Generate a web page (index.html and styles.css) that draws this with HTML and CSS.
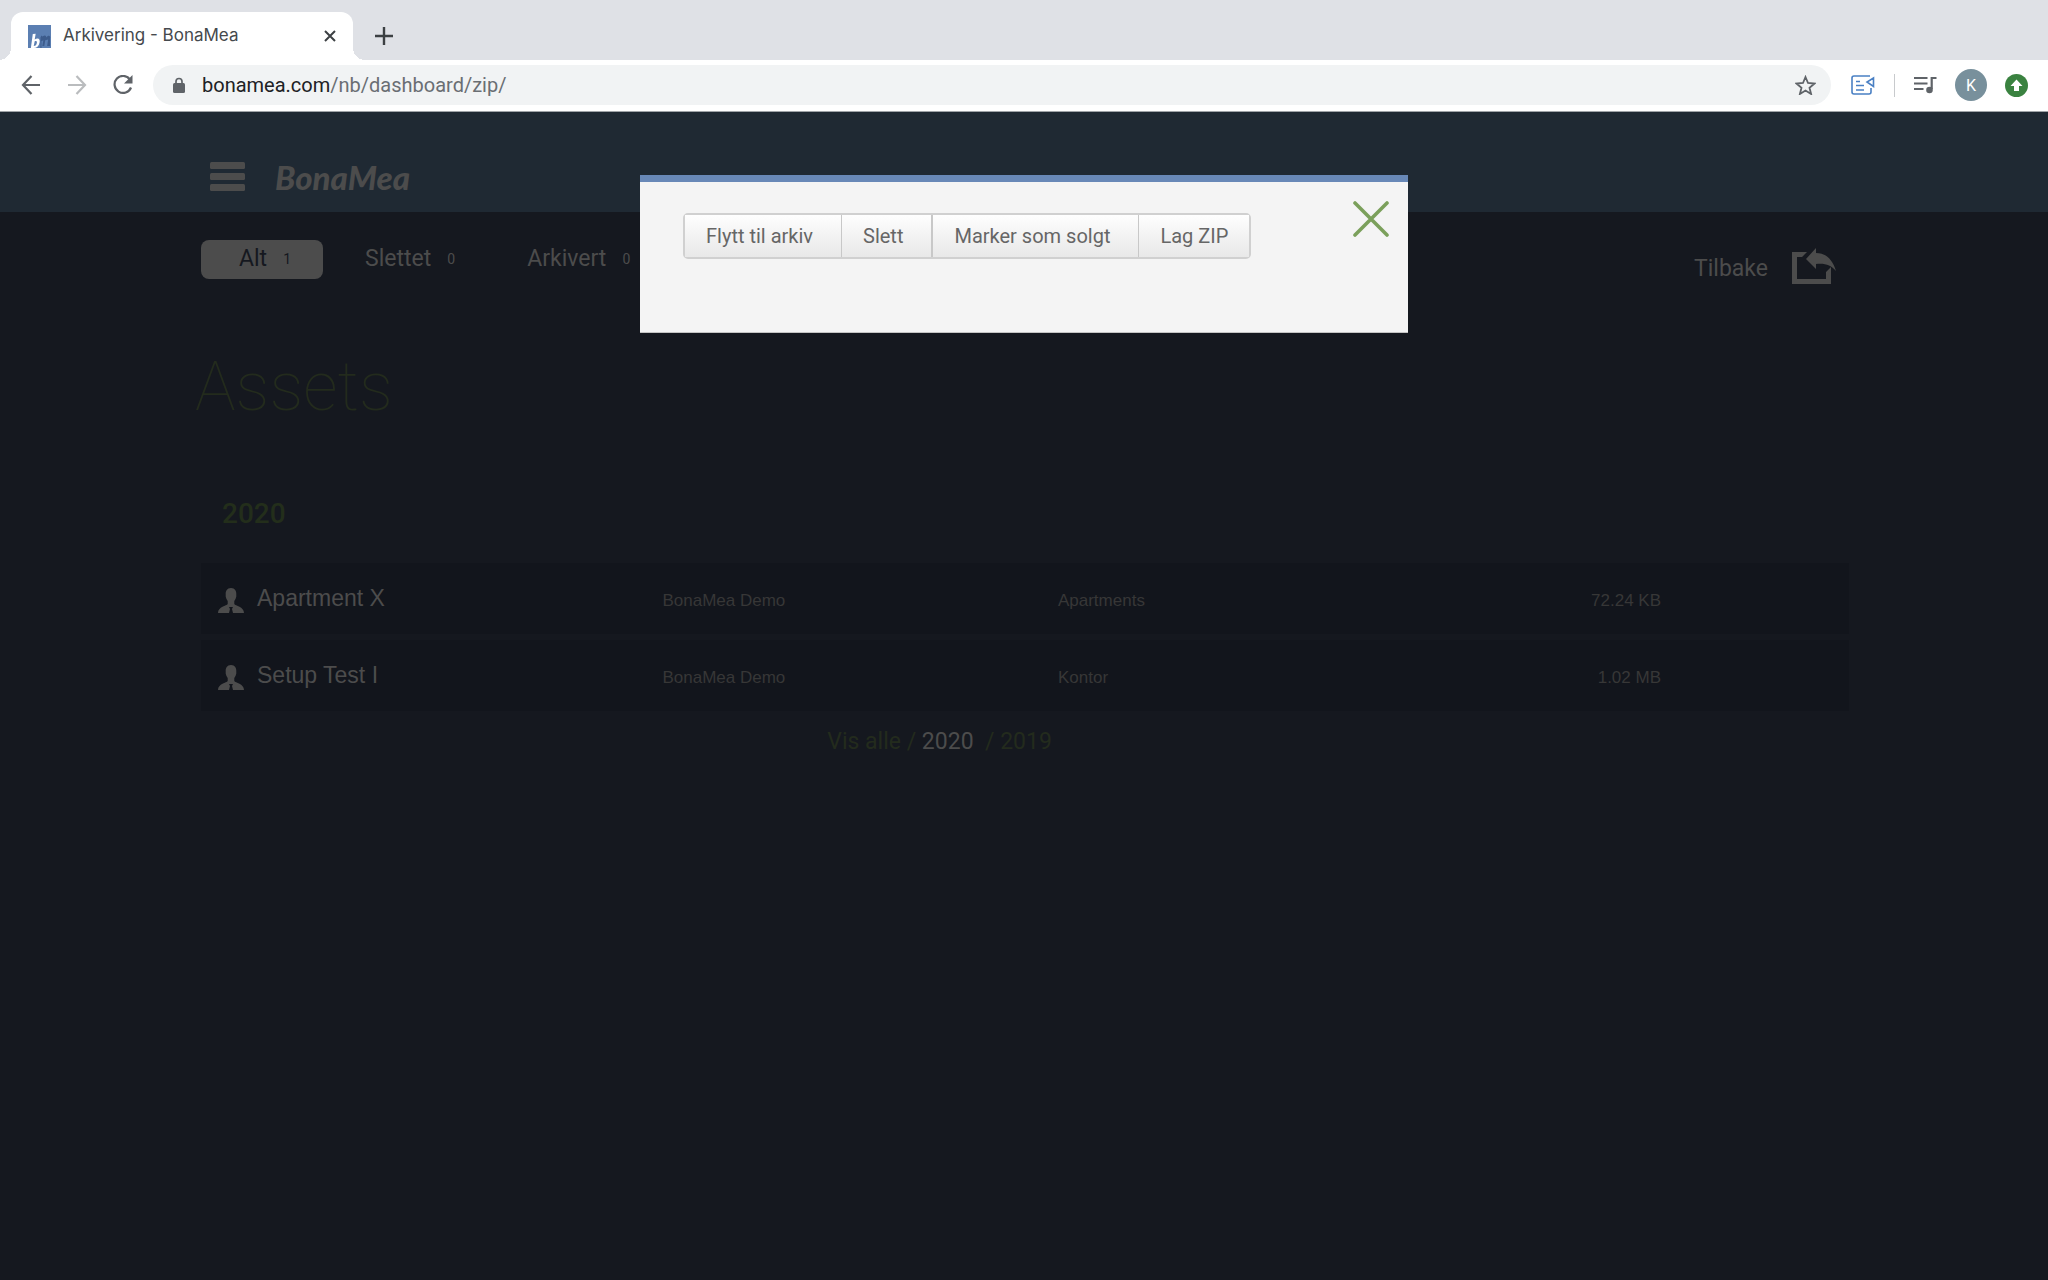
FILE: index.html
```html
<!DOCTYPE html>
<html lang="nb">
<head>
<meta charset="utf-8">
<title>Arkivering - BonaMea</title>
<link rel="stylesheet" href="styles.css">
</head>
<body>
<header class="browser">
  <div class="tabstrip">
    <div class="tab">
      <svg class="favicon" viewBox="0 0 24 24" aria-hidden="true">
        <rect width="24" height="24" fill="#5b7fb2"/>
        <path d="M13 24V13l1-2 1 1c3-2 4-1 4 1 2-3 5-2 4 1v8h-3l1-7-3 1-1 6h-2l1-6-2 1v7z" fill="#3d5c8c"/>
        <path d="M5 9.500l3-.5-1 6c4-2 6 0 5 3.500-.7 3.500-3 5.500-6 5.500H3zM7 17l-1 5c2 0 3-1.500 3.300-3.500C9.500 17 8.500 16.500 7 17z" fill="#fff"/>
      </svg>
      <span class="tab-title">Arkivering - BonaMea</span>
      <button class="icon-btn" type="button" aria-label="Close tab"><svg width="12" height="12" viewBox="0 0 12 12"><path d="M1 1l10 10M11 1L1 11" stroke="#3c4043" stroke-width="2"/></svg></button>
    </div>
    <button class="icon-btn" type="button" aria-label="New tab"><svg width="18" height="18" viewBox="0 0 18 18"><path d="M9 0v18M0 9h18" stroke="#3c4043" stroke-width="2.400"/></svg></button>
  </div>
  <div class="toolbar">
    <nav class="history">
      <button class="icon-btn" type="button" aria-label="Back"><svg width="20" height="20" viewBox="0 0 20 20" fill="none" stroke="#5f6368" stroke-width="2.200"><path d="M19 10H2M10.500 1L2 10l8.500 9"/></svg></button>
      <button class="icon-btn" type="button" aria-label="Forward"><svg width="20" height="20" viewBox="0 0 20 20" fill="none" stroke="#babcbe" stroke-width="2.200"><path d="M1 10h17M9.500 1L18 10l-8.500 9"/></svg></button>
      <button class="icon-btn" type="button" aria-label="Reload"><svg width="20" height="20" viewBox="0 0 20 20"><path d="M17 4.500A8.500 8.500 0 1 0 18 12.500" fill="none" stroke="#5f6368" stroke-width="2.200"/><path d="M19.500 0v8.500H11z" fill="#5f6368"/></svg></button>
    </nav>
    <div class="omnibox">
      <svg width="14" height="17" viewBox="0 0 14 17"><path d="M4 7V4.500a3 3 0 0 1 6 0V7" fill="none" stroke="#5f6368" stroke-width="1.700"/><rect x="1" y="6" width="12" height="10" rx="1.500" fill="#5f6368"/></svg>
      <div class="url"><strong>bonamea.com</strong>/nb/dashboard/zip/</div>
      <button class="icon-btn" type="button" aria-label="Bookmark"><svg width="21" height="20" viewBox="0 0 21 20"><path d="M10.500 2l2.500 6 6.500.5-5 4.300 1.600 6.200-5.600-3.400L4.900 19l1.600-6.200-5-4.300L8 8z" fill="none" stroke="#5f6368" stroke-width="1.800"/></svg></button>
    </div>
    <div class="extensions">
      <button class="icon-btn" type="button" aria-label="Notes"><svg width="24" height="20" viewBox="0 0 24 20" fill="none" stroke="#4a80c4" stroke-width="1.600"><path d="M19 1H3a2 2 0 0 0-2 2v14a2 2 0 0 0 2 2h15a2 2 0 0 0 2-2v-4M5 6.500h4M5 10.500h8M5 15h8M22.500 3v8.500L16 7z"/></svg></button>
      <span class="divider"></span>
      <button class="icon-btn" type="button" aria-label="Media"><svg width="23" height="18" viewBox="0 0 23 18" fill="none" stroke="#5f6368" stroke-width="2.200"><path d="M0 2h13.500M0 7.500h13.500M0 13h9.500M22.500 2h-4.800v11"/><circle cx="15.500" cy="14" r="3.300" fill="#5f6368" stroke="none"/></svg></button>
      <button class="avatar" type="button">K</button>
      <button class="icon-btn" type="button" aria-label="Update"><svg width="23" height="23" viewBox="0 0 23 23"><circle cx="11.500" cy="11.500" r="11.500" fill="#3a8240"/><path d="M11.500 5.500L17.500 12H14v5H9v-5H5.500z" fill="#fff"/></svg></button>
    </div>
  </div>
</header>

<div class="page">
  <header class="site-header">
    <div class="container brand-bar">
      <button class="icon-btn" type="button" aria-label="Meny"><svg width="35" height="30" viewBox="0 0 35 30" fill="#4c4c4c"><rect width="35" height="7" rx="1.500"/><rect y="11" width="35" height="7" rx="1.500"/><rect y="22" width="35" height="7" rx="1.500"/></svg></button>
      <a class="brand" href="#">BonaMea</a>
    </div>
  </header>

  <main class="container">
    <div class="filter-bar">
      <nav class="filters">
        <a class="filter active" href="#">Alt<span class="count">1</span></a>
        <a class="filter" href="#">Slettet<span class="count">0</span></a>
        <a class="filter" href="#">Arkivert<span class="count">0</span></a>
      </nav>
      <a class="back" href="#">Tilbake
        <svg width="44" height="36" viewBox="0 0 44 36" fill="#4c4c4c"><path d="M0 4h15l-5 5H5v22h29v-7l5-5v17H0z"/><path d="M14 11L24 0v5c11 0 17 8 20 18-5-6-11-8-20-7v5z"/></svg>
      </a>
    </div>

    <h1>Assets</h1>
    <h2>2020</h2>

    <table class="assets">
      <tbody>
        <tr>
          <td class="name"><div class="name-cell"><svg width="26" height="25" viewBox="0 0 26 25" fill="#4c4c4c"><path d="M13 0c4 0 5.500 3 5.300 6.500.4 3-1 5-2 6.500v3c1 2 9.700 2.500 9.700 9H15l-1-4 1-2h-4l1 2-1 4H0c0-6.500 8.700-7 9.700-9v-3c-1-1.500-2.400-3.500-2-6.500C7.500 3 9 0 13 0z"/></svg>Apartment X</div></td>
          <td class="owner">BonaMea Demo</td>
          <td class="kind">Apartments</td>
          <td class="size">72.24 KB</td>
        </tr>
        <tr>
          <td class="name"><div class="name-cell"><svg width="26" height="25" viewBox="0 0 26 25" fill="#4c4c4c"><path d="M13 0c4 0 5.500 3 5.300 6.500.4 3-1 5-2 6.500v3c1 2 9.700 2.500 9.700 9H15l-1-4 1-2h-4l1 2-1 4H0c0-6.500 8.700-7 9.700-9v-3c-1-1.500-2.400-3.500-2-6.500C7.500 3 9 0 13 0z"/></svg>Setup Test I</div></td>
          <td class="owner">BonaMea Demo</td>
          <td class="kind">Kontor</td>
          <td class="size">1.02 MB</td>
        </tr>
      </tbody>
    </table>

    <nav class="years"><a href="#">Vis alle</a> / <a class="current" href="#">2020</a> &nbsp;/ <a href="#">2019</a></nav>
  </main>

  <div class="modal" role="dialog" aria-label="Handlinger">
    <div class="actions">
      <button type="button">Flytt til arkiv</button>
      <button class="group-end" type="button">Slett</button>
      <button type="button">Marker som solgt</button>
      <button type="button">Lag ZIP</button>
    </div>
    <button class="icon-btn close" type="button" aria-label="Lukk"><svg width="36" height="36" viewBox="0 0 36 36"><path d="M2 2l32 32M34 2L2 34" stroke="#7ba05b" stroke-width="3.600" stroke-linecap="round"/></svg></button>
  </div>
</div>
</body>
</html>
```
FILE: styles.css
```css
* { box-sizing: border-box; }

body {
  margin: 0;
  min-height: 100vh;
  display: flex;
  flex-direction: column;
  background: #15181f;
  font-family: Roboto, sans-serif;
}

a { color: inherit; text-decoration: none; }
svg { display: block; flex: none; }
button { font-family: inherit; }

.icon-btn {
  display: flex;
  flex: none;
  padding: 0;
  border: 0;
  background: none;
}

/* Browser chrome */
.tabstrip {
  display: flex;
  align-items: center;
  gap: 22px;
  height: 60px;
  padding: 12px 11px 0;
  background: #dfe1e6;
}

.tab {
  position: relative;
  display: flex;
  align-items: center;
  gap: 12px;
  width: 342px;
  height: 48px;
  padding: 0 17px;
  border-radius: 12px 12px 0 0;
  background: #fff;
}

.tab::before,
.tab::after {
  content: "";
  position: absolute;
  bottom: 0;
  width: 12px;
  height: 12px;
}
.tab::before { left: -12px; background: radial-gradient(circle at 0 0, transparent 12px, #fff 12px); }
.tab::after { right: -12px; background: radial-gradient(circle at 100% 0, transparent 12px, #fff 12px); }

.favicon { width: 23px; height: 23px; }
.tab-title { flex: 1; padding-bottom: 2px; font-family: Inter, sans-serif; font-size: 17px; color: #45494d; }

.toolbar {
  display: flex;
  align-items: center;
  gap: 20px;
  height: 52px;
  padding: 0 20px 1px 21px;
  border-bottom: 1px solid #a0a4a8;
  background: #fff;
}

.history { display: flex; gap: 26px; }

.omnibox {
  flex: 1;
  display: flex;
  align-items: center;
  gap: 16px;
  height: 40px;
  padding: 0 15px 0 19px;
  border-radius: 20px;
  background: #f1f3f4;
}

.url { flex: 1; font-size: 20px; color: #6a6e73; }
.url strong { font-weight: 400; color: #202124; }

.extensions { display: flex; align-items: center; gap: 18px; }
.divider { width: 1px; height: 23px; margin: 0 1px; background: #c8cacd; }

.avatar {
  width: 32px;
  height: 32px;
  padding: 0;
  border: 0;
  border-radius: 50%;
  background: #78909c;
  color: #fff;
  font-size: 16px;
}

/* Page */
.page { position: relative; flex: 1; }

.container {
  width: 81%;
  max-width: 1650px;
  margin: 0 auto;
  padding-left: 2px;
}

.site-header { height: 100px; background: #1f2933; }

.brand-bar {
  display: flex;
  align-items: center;
  gap: 30px;
  height: 100%;
  padding: 30px 10px 0 11px;
}

.brand {
  font-family: Lato, sans-serif;
  font-size: 33px;
  font-style: italic;
  font-weight: 900;
  color: #4c4c4c;
}

.filter-bar {
  display: flex;
  justify-content: space-between;
  padding-top: 28px;
  color: #4c4c4c;
  font-size: 23px;
}

.filters { display: flex; gap: 4px; }

.filter {
  display: flex;
  align-items: center;
  height: 39px;
  padding: 0 22px 2px 38px;
  border-radius: 8px;
}

.filter.active { width: 122px; background: #4c4c4c; color: #15181f; }

.count {
  width: 24px;
  margin-left: 8px;
  border-radius: 50%;
  font-size: 14px;
  line-height: 24px;
  text-align: center;
}

.back {
  display: flex;
  align-items: center;
  gap: 24px;
  height: 56px;
  padding-right: 13px;
}
.back svg { margin-bottom: 4px; }

h1 {
  margin: 51px 0 0 -6px;
  font-size: 68px;
  font-weight: 100;
  line-height: 80px;
  color: #232b1d;
}

h2 {
  margin: 67px 0 0;
  padding-left: 21px;
  font-size: 28px;
  font-weight: 500;
  line-height: 40px;
  color: #232e1b;
}

.assets {
  width: 100%;
  margin-top: 23px;
  border-collapse: separate;
  border-spacing: 0 6px;
  table-layout: fixed;
  font-family: "Liberation Sans", Arial, sans-serif;
  font-size: 17px;
  color: #373737;
}

.assets td { height: 71px; padding: 4px 0 0; background: #12151c; }
.assets .name { width: 28%; padding: 0 0 0 17px; }
.assets .owner { width: 24%; }
.assets .size { padding-right: 188px; text-align: right; }

.name-cell {
  display: flex;
  align-items: center;
  gap: 13px;
  font-size: 23px;
  color: #4c4c4c;
}
.name-cell svg { margin-top: 3px; }

.years {
  padding-left: 38%;
  font-size: 23px;
  line-height: 50px;
  color: #232b1d;
}
.years .current { color: #4c4c4c; }

/* Dialog */
.modal {
  position: absolute;
  top: 63px;
  left: 50%;
  width: 768px;
  margin-left: -384px;
  display: flex;
  justify-content: space-between;
  align-items: flex-start;
  min-height: 158px;
  padding: 31px 19px 20px 43px;
  border-top: 7px solid #6888b7;
  border-bottom: 1px solid #c4c4c4;
  background: #f4f4f4;
}

.actions {
  display: flex;
  border: 2px solid #d0d0d0;
  border-radius: 5px;
}

.actions button {
  height: 42px;
  padding: 0 28px 0 21px;
  border: 0;
  border-right: 1px solid #c8c8c8;
  background: linear-gradient(#fefefe, #e8e8e8);
  color: #666;
  font-size: 20px;
}
.actions button:last-child { padding-right: 21px; border-right: 0; }
.actions .group-end { border-right-width: 2px; }

.close { margin-top: -12px; }
```
